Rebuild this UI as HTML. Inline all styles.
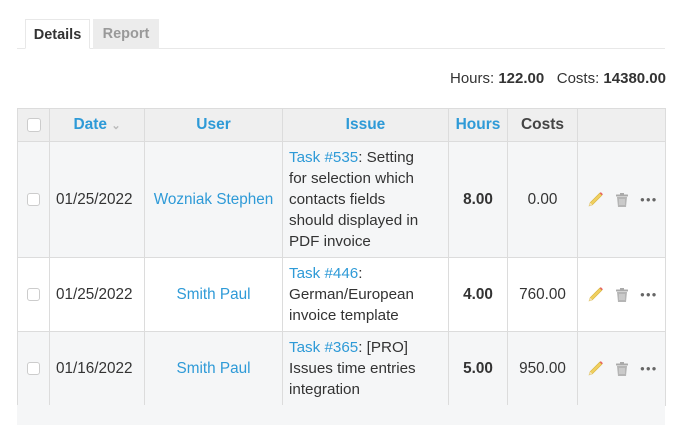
<!DOCTYPE html>
<html><head><style>
*{margin:0;padding:0;box-sizing:border-box}
body{width:680px;height:425px;background:#fff;font-family:"Liberation Sans",sans-serif;color:#333;position:relative;overflow:hidden}
.tabs{position:absolute;left:17px;top:19px;width:648px;height:30px;border-bottom:1px solid #e8e8e8}
.tab{position:absolute;top:0;height:30px;font-size:14.5px;font-weight:bold;line-height:31px;text-align:center}
.t1{left:8px;width:65px;background:#fff;border:1px solid #e8e8e8;border-bottom:1px solid #fff;color:#333}
.t2{left:76px;width:66px;background:#ececec;color:#999}
.sum{position:absolute;right:14px;top:70px;font-size:15px;color:#333}
table{position:absolute;left:17px;top:108px;border-collapse:collapse;table-layout:fixed;width:648px;font-size:15.3px}
td,th{border:1px solid #dcdcdc;vertical-align:middle}
th{height:33px;background:#efefef;color:#2e9ad7;font-weight:bold;font-size:15.5px}
th.c{color:#444}
tr.g td{background:#f5f6f7}
tr.w td{background:#fff}
.cb{display:block;width:13px;height:13px;border:1px solid #ccc;border-radius:3px;background:#fff;margin:0 auto}
th .cb{width:14px;height:14px}
td.d{text-align:center}
td.dt{padding-left:6px}
a{color:#2e9ad7;text-decoration:none}
td.i{padding:0 5px 0 6px;line-height:21px;color:#333;font-size:15.2px}
td.h{text-align:center;font-weight:bold}
td.co{text-align:center}
.ic{display:flex;align-items:center;padding-left:9px;gap:11px}
.dots{font-size:8px;color:#666;letter-spacing:1px}
.foot{position:absolute;left:17px;top:405px;width:648px;height:20px;background:#f5f6f7}
</style></head><body>
<div class="tabs"><div class="tab t1">Details</div><div class="tab t2">Report</div></div>
<div class="sum">Hours: <b>122.00</b>&nbsp;&nbsp; Costs: <b>14380.00</b></div>
<table>
<colgroup><col style="width:32px"><col style="width:95px"><col style="width:138px"><col style="width:166px"><col style="width:59px"><col style="width:70px"><col style="width:88px"></colgroup>
<tr><th><span class="cb"></span></th><th>Date <span style="color:#bbb;font-size:11px">&#8964;</span></th><th>User</th><th>Issue</th><th>Hours</th><th class="c">Costs</th><th></th></tr>
<tr class="g" style="height:116px"><td><span class="cb"></span></td><td class="dt">01/25/2022</td><td class="d"><a>Wozniak Stephen</a></td><td class="i"><a>Task #535</a>: Setting<br>for selection which<br>contacts fields<br>should displayed in<br>PDF invoice</td><td class="h">8.00</td><td class="co">0.00</td><td><div class="ic">
<svg width="17" height="17" viewBox="0 0 16 16"><path d="M2 14 L3 11 L12 2 L14 4 L5 13 Z" fill="#f0d060" stroke="#d8b440" stroke-width=".6"/><path d="M12 2 L14 4 L15 3 L13 1Z" fill="#e86060"/><path d="M2 14 L3 11 L5 13Z" fill="#f3e2b8"/></svg>
<svg width="14" height="16" viewBox="0 0 14 16"><rect x="1" y="2.5" width="12" height="2" rx=".5" fill="#aaa"/><rect x="5" y="1" width="4" height="2" fill="#aaa"/><path d="M2 5 H12 L11 15 H3Z" fill="#b5b5b5"/><path d="M5 7V13M7 7V13M9 7V13" stroke="#e8e8e8" stroke-width=".8"/></svg>
<span class="dots">●●●</span></div></td></tr>
<tr class="w" style="height:74px"><td><span class="cb"></span></td><td class="dt">01/25/2022</td><td class="d"><a>Smith Paul</a></td><td class="i"><a>Task #446</a>:<br>German/European<br>invoice template</td><td class="h">4.00</td><td class="co">760.00</td><td><div class="ic">
<svg width="17" height="17" viewBox="0 0 16 16"><path d="M2 14 L3 11 L12 2 L14 4 L5 13 Z" fill="#f0d060" stroke="#d8b440" stroke-width=".6"/><path d="M12 2 L14 4 L15 3 L13 1Z" fill="#e86060"/><path d="M2 14 L3 11 L5 13Z" fill="#f3e2b8"/></svg>
<svg width="14" height="16" viewBox="0 0 14 16"><rect x="1" y="2.5" width="12" height="2" rx=".5" fill="#aaa"/><rect x="5" y="1" width="4" height="2" fill="#aaa"/><path d="M2 5 H12 L11 15 H3Z" fill="#b5b5b5"/><path d="M5 7V13M7 7V13M9 7V13" stroke="#e8e8e8" stroke-width=".8"/></svg>
<span class="dots">●●●</span></div></td></tr>
<tr class="g" style="height:74px"><td><span class="cb"></span></td><td class="dt">01/16/2022</td><td class="d"><a>Smith Paul</a></td><td class="i"><a>Task #365</a>: [PRO]<br>Issues time entries<br>integration</td><td class="h">5.00</td><td class="co">950.00</td><td><div class="ic">
<svg width="17" height="17" viewBox="0 0 16 16"><path d="M2 14 L3 11 L12 2 L14 4 L5 13 Z" fill="#f0d060" stroke="#d8b440" stroke-width=".6"/><path d="M12 2 L14 4 L15 3 L13 1Z" fill="#e86060"/><path d="M2 14 L3 11 L5 13Z" fill="#f3e2b8"/></svg>
<svg width="14" height="16" viewBox="0 0 14 16"><rect x="1" y="2.5" width="12" height="2" rx=".5" fill="#aaa"/><rect x="5" y="1" width="4" height="2" fill="#aaa"/><path d="M2 5 H12 L11 15 H3Z" fill="#b5b5b5"/><path d="M5 7V13M7 7V13M9 7V13" stroke="#e8e8e8" stroke-width=".8"/></svg>
<span class="dots">●●●</span></div></td></tr>
</table>
<div class="foot"></div>
</body></html>
